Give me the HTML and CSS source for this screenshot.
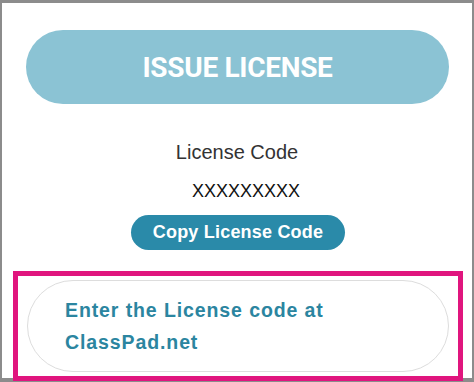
FILE: index.html
```html
<!DOCTYPE html>
<html lang="en">
<head>
<meta charset="utf-8">
<title>Issue License</title>
<link rel="stylesheet" href="styles.css">
</head>
<body>
<div class="frame">
  <button class="issue-btn" type="button">ISSUE LICENSE</button>
  <div class="code-label">License Code</div>
  <div class="code-value">XXXXXXXXX</div>
  <button class="copy-btn" type="button">Copy License Code</button>
  <div class="highlight">
    <div class="pill">
      <p class="pill-text">Enter the License code at<br>ClassPad.net</p>
    </div>
  </div>
</div>
</body>
</html>
```
FILE: styles.css
```css
* { box-sizing: border-box; }
html, body {
  margin: 0;
  padding: 0;
  width: 474px;
  height: 382px;
  overflow: hidden;
  background: #ffffff;
}
.frame {
  width: 474px;
  height: 382px;
  border-top: 3px solid #8c8c8c;
  border-left: 2px solid #8c8c8c;
  border-right: 2px solid #8c8c8c;
  border-bottom: 4px solid #8c8c8c;
  display: flex;
  flex-direction: column;
  align-items: center;
  background: #ffffff;
}
.frame > * { flex-shrink: 0; }
.issue-btn {
  margin-top: 27px;
  width: 423px;
  height: 74px;
  border: none;
  border-radius: 37px;
  background: #8bc3d4;
  color: #ffffff;
  font-family: Roboto, "Liberation Sans", sans-serif;
  font-weight: 700;
  font-size: 28px;
  letter-spacing: -0.3px;
  padding: 0;
  margin-left: 1px;
}
.code-label {
  margin-top: 36px;
  font-family: "Liberation Sans", Arial, sans-serif;
  font-size: 20px;
  line-height: 24px;
  color: #333333;
}
.code-value {
  margin-top: 16px;
  font-family: "Liberation Sans", Arial, sans-serif;
  font-size: 18px;
  line-height: 22px;
  color: #111111;
  margin-left: 18px;
}
.copy-btn {
  margin-top: 13px;
  width: 214px;
  height: 35px;
  border: none;
  border-radius: 18px;
  background: #2a8aa9;
  color: #ffffff;
  font-family: "Liberation Sans", Arial, sans-serif;
  font-weight: 700;
  font-size: 18px;
  letter-spacing: 0.2px;
  padding: 0;
  margin-left: 2px;
}
.highlight {
  align-self: flex-start;
  margin-top: 21px;
  margin-left: 11px;
  width: 450px;
  height: 110px;
  border: 5px solid #e0157e;
  padding: 4px 4px 4px 9px;
  position: relative;
  z-index: 1;
  background: #ffffff;
}
.pill {
  width: 422px;
  height: 92px;
  border: 1px solid #dddddd;
  border-radius: 46px;
  padding: 13px 0 0 37px;
}
.pill-text {
  margin: 0;
  font-family: "Liberation Sans", Arial, sans-serif;
  font-weight: 700;
  font-size: 19.5px;
  line-height: 32px;
  letter-spacing: 0.9px;
  color: #2b85a0;
}
```
